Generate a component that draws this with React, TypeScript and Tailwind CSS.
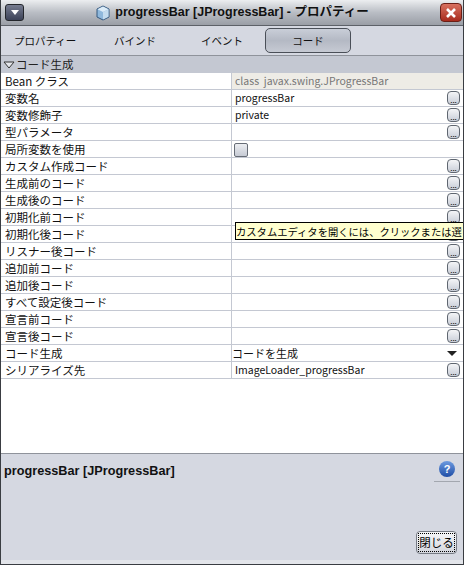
const font = "font-['Noto_Sans_CJK_JP','Liberation_Sans',sans-serif]"

const rows = [
  { label: 'Bean クラス', value: 'class\u00a0 javax.swing.JProgressBar', kind: 'readonly' },
  { label: '変数名', value: 'progressBar', kind: 'button' },
  { label: '変数修飾子', value: 'private', kind: 'button' },
  { label: '型パラメータ', value: '', kind: 'button' },
  { label: '局所変数を使用', value: '', kind: 'check' },
  { label: 'カスタム作成コード', value: '', kind: 'button' },
  { label: '生成前のコード', value: '', kind: 'button' },
  { label: '生成後のコード', value: '', kind: 'button' },
  { label: '初期化前コード', value: '', kind: 'button' },
  { label: '初期化後コード', value: '', kind: 'button' },
  { label: 'リスナー後コード', value: '', kind: 'button' },
  { label: '追加前コード', value: '', kind: 'button' },
  { label: '追加後コード', value: '', kind: 'button' },
  { label: 'すべて設定後コード', value: '', kind: 'button' },
  { label: '宣言前コード', value: '', kind: 'button' },
  { label: '宣言後コード', value: '', kind: 'button' },
  { label: 'コード生成', value: 'コードを生成', kind: 'select' },
  { label: 'シリアライズ先', value: 'ImageLoader_progressBar', kind: 'button' },
]

function DotsButton() {
  return (
    <div className="w-[13px] h-[14px] shrink-0 rounded-[4px] border border-[#5f6670] bg-gradient-to-b from-[#f4f5f7] to-[#c9ced8] flex items-end justify-center">
      <span className="text-[8px] leading-[8px] text-black">...</span>
    </div>
  )
}

function Row({ label, value, kind }: { label: string; value: string; kind: string }) {
  return (
    <div className="flex h-[17px] border-b border-[#c4c8d2] text-[11.5px] leading-[16px] text-[#111]">
      <div className="w-[231px] shrink-0 border-r border-[#c4c8d2] pl-[4px] truncate">{label}</div>
      <div className={`flex-1 flex items-center pr-[3px] ${kind === 'readonly' ? 'bg-[#eeece6] text-[#777]' : 'bg-white'} ${kind === 'select' ? 'pl-0' : 'pl-[3px]'}`}>
        <span className={`flex-1 truncate ${kind === 'select' ? 'text-[11px]' : 'text-[10.5px]'}`}>{value}</span>
        {kind === 'button' && <DotsButton />}
        {kind === 'select' && <div className="mr-[3px] w-0 h-0 border-x-[5px] border-x-transparent border-t-[5px] border-t-[#222]" />}
      </div>
    </div>
  )
}

export default function App() {
  return (
    <div className={`${font} relative w-[464px] h-[565px] overflow-hidden bg-[#d5d8e1] border-x border-b border-[#3a3d42] flex flex-col`}>
      {/* title bar */}
      <div className="h-[26px] shrink-0 -mx-px flex items-center bg-gradient-to-b from-[#eceef0] via-[#b9bdc4] to-[#9a9ea6] border-b border-[#5d6168]">
        <div className="ml-[5px] w-[19px] h-[17px] rounded-[3px] border border-[#23262c] bg-gradient-to-b from-[#767c90] to-[#3c4258] flex items-center justify-center">
          <div className="w-0 h-0 border-x-[4px] border-x-transparent border-t-[5px] border-t-white" />
        </div>
        <div className="flex-1 flex items-center justify-center gap-[4px]">
          <svg width="16" height="16" viewBox="0 0 16 16">
            <path d="M8 1 L14 4 V12 L8 15 L2 12 V4 Z" fill="#8fb8dc" stroke="#35587e" />
            <path d="M2.5 4.3 L8 7 L13.5 4.3 L8 1.5 Z" fill="#dcecf8" />
            <path d="M8 7 V14.5 L13.5 11.7 V4.3 Z" fill="#c4dcef" />
          </svg>
          <span className="text-[12.5px] font-bold text-[#111] font-['Liberation_Sans','Noto_Sans_CJK_JP',sans-serif]">progressBar [JProgressBar] - プロパティー</span>
        </div>
        <div className="mr-[2px] w-[22px] h-[19px] rounded-[4px] border border-[#6b1f17] bg-gradient-to-b from-[#d8705f] to-[#a82a1c] flex items-center justify-center">
          <svg width="12" height="12" viewBox="0 0 12 12">
            <path d="M2 2 L10 10 M10 2 L2 10" stroke="white" strokeWidth="2.6" />
          </svg>
        </div>
      </div>

      {/* tabs */}
      <div className="h-[30px] shrink-0 flex items-center text-[10.5px] text-[#111] border-b border-[#8f939b]">
        <div className="w-[91px] pl-[13px]">プロパティー</div>
        <div className="w-[87px] pl-[22px]">バインド</div>
        <div className="w-[86px] pl-[22px]">イベント</div>
        <div className="w-[86px] h-[25px] rounded-[5px] border border-[#4a4f58] bg-gradient-to-b from-[#c9ced8] via-[#b4b9c4] to-[#c6cad3] flex items-center justify-center">コード</div>
      </div>

      {/* section header */}
      <div className="h-[17px] shrink-0 flex items-center bg-[#c4c8d2] text-[11.5px] text-[#222] pl-[2px]">
        <svg width="12" height="8" viewBox="0 0 12 8" className="mr-[1px]">
          <path d="M1 1 H11 L6 7 Z" fill="#e4e6eb" stroke="#333" />
        </svg>
        コード生成
      </div>

      {/* property rows */}
      <div className="shrink-0 bg-white">
        {rows.map((r) => (
          <Row key={r.label} label={r.label} value={r.value} kind={r.kind} />
        ))}
      </div>

      <div className="flex-1 bg-white border-b border-[#8f939b]" />

      {/* description panel */}
      <div className="h-[106px] shrink-0 flex flex-col">
        <div className="flex pt-[7px] pr-[3px]">
          <div className="flex-1 pl-[3px] pt-[1px] text-[12.7px] font-bold text-[#111] font-['Liberation_Sans',sans-serif]">progressBar [JProgressBar]</div>
          <div className="w-[26px] h-[21px] border-b border-[#a3a7af] flex justify-center">
            <div className="w-[16px] h-[16px] rounded-full bg-gradient-to-b from-[#6d9be0] to-[#1f4da6] text-white text-[11px] font-bold leading-[16px] text-center font-['Liberation_Sans',sans-serif]">?</div>
          </div>
        </div>
        <div className="flex-1 flex items-end justify-end pr-[6px] pb-[6px]">
          <div className="w-[41px] h-[23px] rounded-[4px] border border-[#767b84] bg-gradient-to-b from-[#f6f7f9] to-[#d3d6dd] p-[1px]">
            <div className="h-full border border-dotted border-black flex items-center justify-center text-[11.5px] leading-none whitespace-nowrap text-black">閉じる</div>
          </div>
        </div>
      </div>
      <div className="h-[4px] shrink-0 bg-[#e3e5ea]" />

      {/* checkbox over the property row */}
      <div className="absolute left-[233px] top-[143px] w-[14px] h-[14px] rounded-[2px] border border-[#666c76] bg-gradient-to-b from-[#eceef2] to-[#c6cad4]" />

      {/* tooltip */}
      <div className="absolute left-[234px] top-[222px] w-[230px] h-[18px] bg-[#ffffcf] border border-black text-[10.3px] leading-[17px] text-black whitespace-nowrap overflow-hidden">
        カスタムエディタを開くには、クリックまたは選
      </div>
    </div>
  )
}
